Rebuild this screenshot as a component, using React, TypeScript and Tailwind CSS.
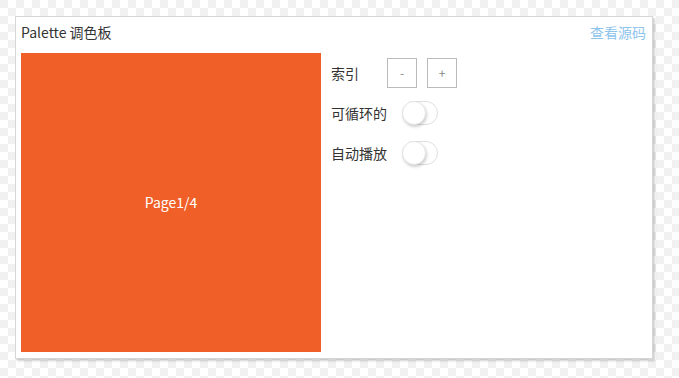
import { useState } from 'react';

function Toggle({ on, onClick }: { on: boolean; onClick: () => void }) {
  return (
    <button
      onClick={onClick}
      className={`relative w-[36px] h-[24px] rounded-full border transition-colors ${
        on ? 'bg-[#4cd964] border-[#4cd964]' : 'bg-white border-[#dfdfdf]'
      }`}
    >
      <span
        className={`absolute top-[-1px] w-[24px] h-[24px] rounded-full bg-white border border-[#e4e4e4] shadow-[1px_2px_3px_rgba(0,0,0,0.18)] ${
          on ? 'left-[11px]' : 'left-[-1px]'
        }`}
      />
    </button>
  );
}

// transparent-canvas checker behind the demo panel
function Checker() {
  return (
    <svg className="absolute inset-0 w-full h-full" aria-hidden="true">
      <defs>
        <pattern id="chk" width="16" height="16" patternUnits="userSpaceOnUse">
          <rect width="16" height="16" fill="#ffffff" />
          <rect width="8" height="8" fill="#f1f1f1" />
          <rect x="8" y="8" width="8" height="8" fill="#f1f1f1" />
        </pattern>
      </defs>
      <rect width="100%" height="100%" fill="url(#chk)" />
    </svg>
  );
}

export default function App() {
  const [index, setIndex] = useState(0);
  const [loop, setLoop] = useState(false);
  const [auto, setAuto] = useState(false);
  const total = 4;

  return (
    <div
      className="relative w-[679px] h-[378px] pl-[15px] pt-[16px] bg-white"
      style={{ fontFamily: '"Segoe UI", "Noto Sans CJK SC", "Noto Sans", sans-serif' }}
    >
      <Checker />
      <div className="relative w-[638px] h-[343px] bg-white border border-[#d6d6d6] shadow-[2px_2px_2px_rgba(0,0,0,0.18)] px-[5px] pb-[5px]">
        {/* Header */}
        <div className="h-[36px] pt-[5px] flex items-start justify-between text-[14px]">
          <span className="text-[#333]">Palette 调色板</span>
          <a className="text-[#8ec4ec] mr-[1px] cursor-pointer">查看源码</a>
        </div>

        {/* Body */}
        <div className="flex">
          <div className="w-[300px] h-[299px] bg-[#f15f28] flex items-center justify-center text-white text-[14px]">
            Page{index + 1}/{total}
          </div>

          <div className="ml-[10px] pt-[5px] text-[14px] text-[#333]">
            <div className="h-[30px] flex items-center">
              <span className="w-[56px]">索引</span>
              <button
                onClick={() => setIndex(i => (loop ? (i + total - 1) % total : Math.max(0, i - 1)))}
                className="w-[30px] h-[30px] border border-[#bbb] text-[#888] text-[12px] flex items-center justify-center"
              >
                -
              </button>
              <button
                onClick={() => setIndex(i => (loop ? (i + 1) % total : Math.min(total - 1, i + 1)))}
                className="ml-[10px] w-[30px] h-[30px] border border-[#bbb] text-[#888] text-[12px] flex items-center justify-center"
              >
                +
              </button>
            </div>
            <div className="h-[30px] mt-[10px] flex items-center">
              <span className="w-[71px]">可循环的</span>
              <Toggle on={loop} onClick={() => setLoop(v => !v)} />
            </div>
            <div className="h-[30px] mt-[10px] flex items-center">
              <span className="w-[71px]">自动播放</span>
              <Toggle on={auto} onClick={() => setAuto(v => !v)} />
            </div>
          </div>
        </div>
      </div>
    </div>
  );
}
